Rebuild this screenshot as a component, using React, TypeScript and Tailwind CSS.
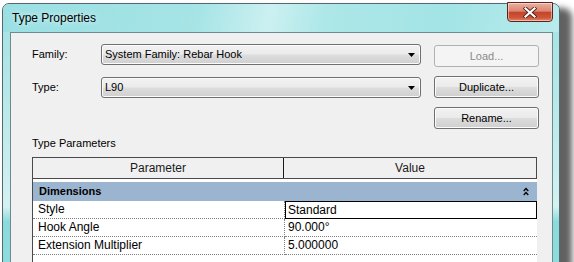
import React from "react";

const btnFace =
  "bg-[linear-gradient(180deg,#f2f2f2_0%,#ebebeb_48%,#dddddd_52%,#cfcfcf_100%)] border border-[#707070] rounded-[3px] shadow-[inset_0_0_0_1px_#fbfbfb]";

function Combo({ value }: { value: string }) {
  return (
    <div className={`w-[320px] h-[21px] flex items-center pl-[3px] pr-[5px] text-[11px] ${btnFace}`}>
      <span className="flex-1 truncate">{value}</span>
      <svg width="7" height="4" viewBox="0 0 7 4">
        <path d="M0 0 L7 0 L3.5 4 Z" fill="#000" />
      </svg>
    </div>
  );
}

function Button({ label, disabled }: { label: string; disabled?: boolean }) {
  if (disabled) {
    return (
      <div className="w-[105px] h-[22px] flex items-center justify-center text-[11px] text-[#8a8a8a] border border-[#adb2b5] rounded-[3px] bg-[#f4f4f4]">
        {label}
      </div>
    );
  }
  return (
    <div className={`w-[105px] h-[22px] flex items-center justify-center text-[11px] ${btnFace}`}>
      {label}
    </div>
  );
}

const rows = [
  { name: "Style", value: "Standard", active: true },
  { name: "Hook Angle", value: "90.000°" },
  { name: "Extension Multiplier", value: "5.000000" },
];

export default function App() {
  return (
    <div className="w-[574px] h-[262px] overflow-hidden bg-white font-['Liberation_Sans',Arial,sans-serif] text-black">
      <div className="relative ml-[2px] mt-[3px] w-[558px] h-[300px] rounded-t-[7px] border border-[#56676d] bg-[linear-gradient(180deg,#a2e2e4_0%,#bdeaea_40%,#d4f2f2_68%,#8cdbdc_73%,#90dede_100%)] shadow-[10px_7px_6px_2px_rgba(0,0,0,0.62)]">
        {/* title bar */}
        <div className="h-[28px] flex items-center pl-[9px] rounded-t-[6px] bg-[linear-gradient(100deg,#9ae0e3_0%,#a6e4e6_35%,#ccf0f1_48%,#ade7e8_58%,#a3e4e6_80%,#b9ebec_100%)] text-[12px] [text-shadow:0_0_6px_#ffffff]">
          Type Properties
        </div>

        {/* close button */}
        <div className="absolute top-[-2px] right-[6px] w-[46px] h-[20px] flex items-center justify-center rounded-b-[4px] border border-[#5b231a] bg-[linear-gradient(180deg,#eab0a2_0%,#dc8571_45%,#c4452c_52%,#cd563b_82%,#e58a6c_100%)] shadow-[inset_0_0_0_1px_rgba(255,255,255,0.45)]">
          <svg width="14" height="11" viewBox="0 0 14 11">
            <path d="M2.5 1.5 L11.5 9.5 M11.5 1.5 L2.5 9.5" stroke="#4a1c12" strokeWidth="3.8" strokeLinecap="square" />
            <path d="M2.5 1.5 L11.5 9.5 M11.5 1.5 L2.5 9.5" stroke="#ffffff" strokeWidth="2.2" strokeLinecap="square" />
          </svg>
        </div>

        {/* client area */}
        <div className="ml-[7px] mr-[6px] h-[272px] border border-[#6d8a90] bg-[#f0f0f0] pl-[21px] pt-[11px]">
          <div className="flex items-start h-[23px]">
            <div className="w-[69px] h-[21px] flex items-center text-[11px]">Family:</div>
            <Combo value="System Family: Rebar Hook" />
            <div className="ml-[13px] mt-[1px]">
              <Button label="Load..." disabled />
            </div>
          </div>

          <div className="flex items-start mt-[9px]">
            <div className="w-[69px] h-[21px] mt-[1px] flex items-center text-[11px]">Type:</div>
            <div className="mt-[1px]">
              <Combo value="L90" />
            </div>
            <div className="ml-[13px]">
              <Button label="Duplicate..." />
            </div>
          </div>

          <div className="ml-[402px] mt-[9px]">
            <Button label="Rename..." />
          </div>

          <div className="mt-[7px] text-[11px] leading-[14px]">Type Parameters</div>

          {/* table */}
          <div className="mt-[7px] w-[505px]">
            <div className="flex h-[22px] border border-[#4a4a4a] bg-[#f0f0f0] text-[12px] text-[#1a1a1a]">
              <div className="w-[251px] border-r border-[#1a1a1a] flex items-center justify-center">Parameter</div>
              <div className="flex-1 flex items-center justify-center">Value</div>
            </div>
            <div className="border-l border-[#4a4a4a] bg-white pt-[3px] h-[90px]">
              <div className="h-[19px] bg-[#9bb4cf] flex items-center pl-[6px] pr-[8px]">
                <span className="flex-1 text-[11px] font-bold">Dimensions</span>
                <svg width="6" height="9" viewBox="0 0 6 9">
                  <path d="M0.7 4 L3 1.5 L5.3 4 M0.7 8 L3 5.5 L5.3 8" stroke="#000" strokeWidth="1.3" fill="none" />
                </svg>
              </div>
              {rows.map((r) => (
                <div key={r.name} className="flex h-[18px] text-[12px] leading-[17px]">
                  <div className="w-[252px] pl-[5px] border-b border-r border-dotted border-[#808080]">
                    {r.name}
                  </div>
                  {r.active ? (
                    <div className="flex-1 pl-[2px] border border-[#000]">{r.value}</div>
                  ) : (
                    <div className="flex-1 pl-[3px] border-b border-dotted border-[#808080]">{r.value}</div>
                  )}
                </div>
              ))}
            </div>
          </div>
        </div>
      </div>
    </div>
  );
}
